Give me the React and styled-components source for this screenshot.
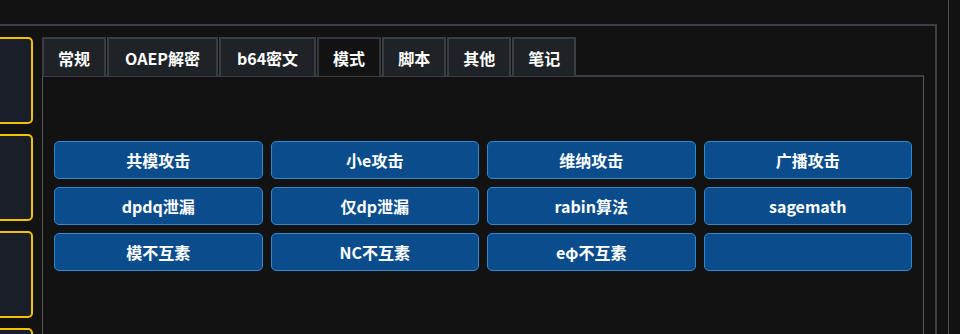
import React, { useState } from "react";
import styled, { createGlobalStyle } from "styled-components";

const Global = createGlobalStyle`
  *, *::before, *::after { box-sizing: border-box; }
  html, body { margin: 0; padding: 0; background: #121212; }
  body { font-family: "Noto Sans CJK SC", "Noto Sans", sans-serif; color: #fff; overflow: hidden; }
`;

const Page = styled.div`
  width: 949px;
  height: 334px;
  border-right: 1px solid #4a4f55;
  overflow: hidden;
  background: #121212;
`;

const GroupBox = styled.div`
  margin-top: 24px;
  margin-left: -20px;
  width: 957px;
  height: 340px;
  border: 2px solid #3c3f43;
  display: flex;
  align-items: stretch;
  gap: 9px;
  padding: 11px 11px 0 11px;
`;

const CardColumn = styled.div`
  display: flex;
  flex-direction: column;
  gap: 10px;
  flex: none;
`;

const Card = styled.div`
  flex: none;
  width: 40px;
  height: 87px;
  background: #1a1e29;
  border: 2px solid #f2c200;
  border-radius: 5px;
`;

const TabWidget = styled.div`
  flex: 1;
  display: flex;
  flex-direction: column;
  min-width: 0;
`;

const TabBar = styled.div`
  display: flex;
  gap: 1px;
  height: 38px;
  flex: none;
`;

const Tab = styled.button`
  height: 39px;
  padding: 0 ${(p) => (p.$latin ? 16 : 14)}px;
  margin: 0;
  border: 2px solid ${(p) => (p.$active ? "#34373b" : "#3a3e42")};
  border-bottom: none;
  background: ${(p) => (p.$active ? "#121212" : "#1f2328")};
  color: #fff;
  font-family: "Noto Sans CJK SC", "Noto Sans", sans-serif;
  font-weight: 700;
  font-size: 16px;
  line-height: 1;
  cursor: pointer;
  position: relative;
  z-index: ${(p) => (p.$active ? 2 : 1)};
`;

const Pane = styled.div`
  flex: 1;
  border: 1px solid #55595e;
  border-top: 2px solid #3c3f43;
  padding: 64px 11px 0 11px;
`;

const Grid = styled.div`
  display: grid;
  grid-template-columns: repeat(4, 1fr);
  column-gap: 8px;
  row-gap: 8px;
`;

const ActionButton = styled.button`
  height: 38px;
  margin: 0;
  padding: 0;
  background: #0b4d8c;
  border: 1.5px solid #3189cc;
  border-radius: 5px;
  color: #fff;
  font-family: "Noto Sans CJK SC", "Noto Sans", sans-serif;
  font-weight: 700;
  font-size: 16px;
  line-height: 1;
  cursor: pointer;
`;

const tabs = ["常规", "OAEP解密", "b64密文", "模式", "脚本", "其他", "笔记"];
const buttons = [
  "共模攻击", "小e攻击", "维纳攻击", "广播攻击",
  "dpdq泄漏", "仅dp泄漏", "rabin算法", "sagemath",
  "模不互素", "NC不互素", "eφ不互素", "",
];

export default function App() {
  const [active, setActive] = useState(3);
  return (
    <>
      <Global />
      <Page>
        <GroupBox>
          <CardColumn>
            <Card />
            <Card />
            <Card />
            <Card />
          </CardColumn>
          <TabWidget>
            <TabBar>
              {tabs.map((t, i) => (
                <Tab
                  key={t}
                  $active={i === active}
                  $latin={/[A-Za-z0-9]/.test(t)}
                  onClick={() => setActive(i)}
                >
                  {t}
                </Tab>
              ))}
            </TabBar>
            <Pane>
              <Grid>
                {buttons.map((b, i) => (
                  <ActionButton key={i}>{b}</ActionButton>
                ))}
              </Grid>
            </Pane>
          </TabWidget>
        </GroupBox>
      </Page>
    </>
  );
}
